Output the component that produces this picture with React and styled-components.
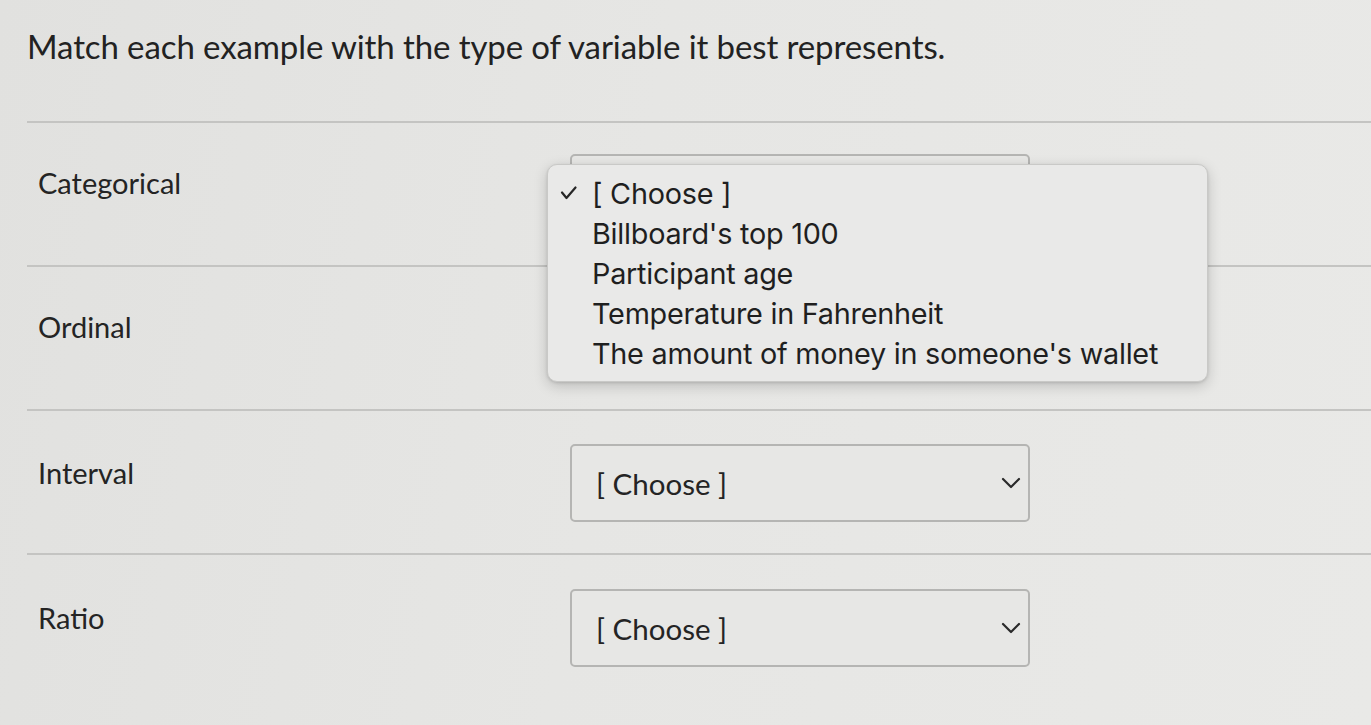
import React from "react";
import styled, {createGlobalStyle} from "styled-components";

const GlobalStyle = createGlobalStyle`
  html, body {
    margin: 0;
    padding: 0;
    background: #e3e3e1;
  }
  body {
    font-family: Lato, "Noto Sans", sans-serif;
    color: #222;
  }
`

const Page = styled.div`
  width: 1371px;
  height: 725px;
  overflow: hidden;
  padding: 26px 0 0 27px;
  box-sizing: border-box;
  background: linear-gradient(100deg, #e1e1df 0%, #e6e6e4 45%, #e9e9e7 100%);
`

const Title = styled.h1`
  margin: 0;
  font-weight: normal;
  font-size: 33px;
  line-height: 40px;
  letter-spacing: -0.1px;
  color: #222;
  padding-bottom: 55px;
  border-bottom: 2px solid #c4c4c2;
`

const Row = styled.div`
  display: grid;
  grid-template-columns: 543px 460px;
  height: 144px;
  padding-top: ${p => p.$top || 31}px;
  box-sizing: border-box;
  border-bottom: 2px solid #c4c4c2;

  &:last-child {
    border-bottom: none;
  }
`

const Label = styled.div`
  font-size: 29px;
  line-height: 36px;
  padding: 11px 0 0 11px;
  color: #242424;
`

const SelectWrap = styled.div`
  position: relative;
`

const SelectBox = styled.div`
  height: 78px;
  box-sizing: border-box;
  border: 2px solid #b5b5b3;
  border-radius: 5px;
  background: #e7e7e5;
  display: flex;
  align-items: center;
  justify-content: space-between;
  padding: 0 6px 0 24px;
  font-size: 29.5px;
  color: #242424;
`

const Value = styled.span`
  visibility: ${p => p.$covered ? "hidden" : "visible"};
`

const Chevron = () => (
    <svg width="22" height="14" viewBox="0 0 22 14">
        <path d="M3 3 L11 11 L19 3" fill="none" stroke="#2a2a2a" strokeWidth="2.2" strokeLinecap="round" strokeLinejoin="round"/>
    </svg>
)

const Menu = styled.ul`
  position: absolute;
  left: -23px;
  top: 10px;
  width: 661px;
  height: 218px;
  box-sizing: border-box;
  margin: 0;
  padding: 8px 0 0 0;
  list-style: none;
  background: #e9e9e8;
  border: 1px solid #c9c9c7;
  border-radius: 10px;
  box-shadow: 0 4px 14px rgba(0, 0, 0, 0.18), 0 1px 3px rgba(0, 0, 0, 0.12);
  z-index: 5;
  font-family: Inter, "Liberation Sans", sans-serif;
`

const Item = styled.li`
  display: flex;
  align-items: center;
  height: 40px;
  font-size: 28.8px;
  color: #1f1f1f;
  letter-spacing: -0.25px;
`

const CheckSlot = styled.span`
  width: 44px;
  padding-left: 12px;
  box-sizing: border-box;
  display: flex;
  align-items: center;
`

const CheckMark = () => (
    <svg width="18" height="14" viewBox="0 0 18 14">
        <path d="M2 6.5 L6.5 12 L15.5 1.5" fill="none" stroke="#262626" strokeWidth="2.2" strokeLinecap="round" strokeLinejoin="round"/>
    </svg>
)

const options = [
    "[ Choose ]",
    "Billboard's top 100",
    "Participant age",
    "Temperature in Fahrenheit",
    "The amount of money in someone's wallet",
]

function Select({covered, children}) {
    return (
        <SelectWrap>
            <SelectBox>
                <Value $covered={covered}>[ Choose ]</Value>
                <Chevron/>
            </SelectBox>
            {children}
        </SelectWrap>
    )
}

export default function App() {
    return (<>
        <GlobalStyle/>
        <Page>
            <Title>Match each example with the type of variable it best represents.</Title>

            <Row $top={31}>
                <Label>Categorical</Label>
                <Select covered>
                    <Menu>
                        {options.map((o, i) => (
                            <Item key={o}>
                                <CheckSlot>{i === 0 && <CheckMark/>}</CheckSlot>
                                {o}
                            </Item>
                        ))}
                    </Menu>
                </Select>
            </Row>

            <Row $top={31}>
                <Label>Ordinal</Label>
                <Select covered/>
            </Row>

            <Row $top={33}>
                <Label>Interval</Label>
                <Select/>
            </Row>

            <Row $top={34}>
                <Label>Ratio</Label>
                <Select/>
            </Row>
        </Page>
    </>)
}
